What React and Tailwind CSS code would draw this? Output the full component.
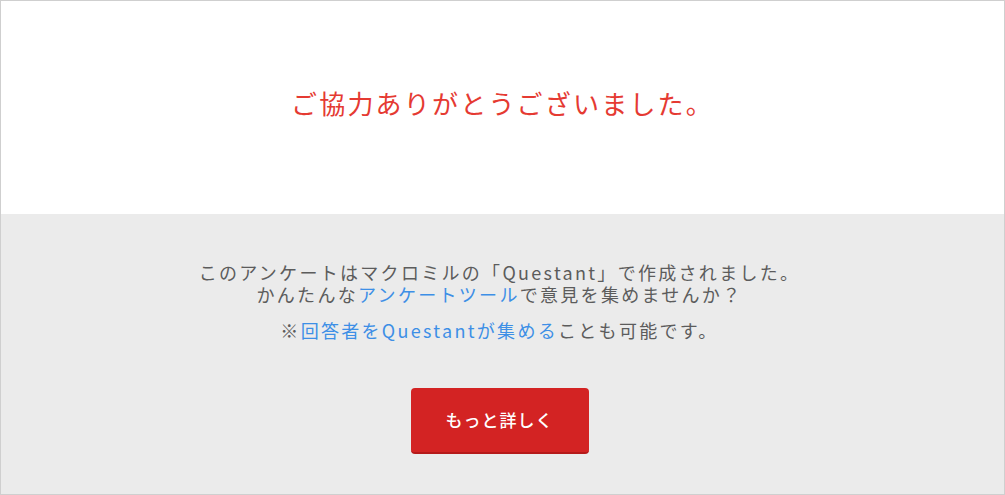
export default function App() {
  const font = { fontFamily: '"Noto Sans CJK JP", "Noto Sans", sans-serif' }

  return (
    <div className="w-[1005px] h-[495px] border border-[#cfcfcf] flex flex-col" style={font}>
      {/* Thanks */}
      <div className="h-[213px] bg-white flex items-center justify-center">
        <h1 className="text-[26px] leading-none tracking-[2.2px] text-[#e53a32] pb-[10px]">
          ご協力ありがとうございました。
        </h1>
      </div>

      {/* Footer */}
      <div className="flex-1 bg-[#ebebeb] flex flex-col items-center pt-[47px] pr-[6px] text-[#5c5c5c]">
        <p className="text-[18px] leading-[22px] tracking-[2.3px] text-center">
          このアンケートはマクロミルの「Questant」で作成されました。
          <br />
          かんたんな<a className="text-[#3d8fe6]">アンケートツール</a>で意見を集めませんか？
        </p>
        <p className="text-[18px] leading-[22px] tracking-[2.3px] mt-[14px]">
          ※<a className="text-[#3d8fe6]">回答者をQuestantが集める</a>ことも可能です。
        </p>
        <button className="mt-[47px] w-[178px] h-[66px] rounded-[4px] bg-[#d32323] border-b-2 border-[#b51a1a] text-white text-[17px] tracking-[1px] font-medium">
          もっと詳しく
        </button>
      </div>
    </div>
  )
}
